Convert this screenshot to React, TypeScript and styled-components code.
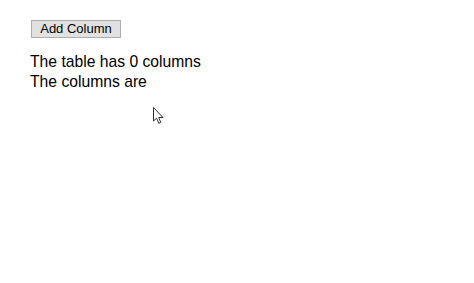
import React, { useState } from "react";
import styled, { createGlobalStyle } from "styled-components";

const GlobalStyle = createGlobalStyle`
  html, body {
    margin: 0;
    padding: 0;
    background: #ffffff;
  }
  body {
    font-family: "Liberation Sans", Arial, sans-serif;
    color: #000000;
  }
`;

const Page = styled.main`
  position: relative;
  width: 474px;
  height: 283px;
  padding: 20px 0 0 30px;
  box-sizing: border-box;
  overflow: hidden;
`;

const Toolbar = styled.div`
  display: flex;
  padding-left: 1px;
`;

const AddButton = styled.button`
  width: 90px;
  height: 18px;
  padding: 0;
  margin: 0;
  font-family: "Liberation Sans", Arial, sans-serif;
  font-size: 13px;
  line-height: 16px;
  color: #000000;
  background: #e1e1e1;
  border: 1px solid #adadad;
  border-radius: 0;
  cursor: default;
`;

const Summary = styled.div`
  display: flex;
  flex-direction: column;
  margin-top: 14px;
  font-size: 15.7px;
  line-height: 20px;
`;

const Line = styled.p`
  margin: 0;
`;

const Cursor = styled.svg`
  position: absolute;
  left: 153px;
  top: 107px;
`;

const PointerIcon = () => (
  <Cursor width="12" height="18" viewBox="0 0 12 18">
    <path
      d="M0.5 0.5 L0.5 14 L3.6 11.2 L5.8 16.3 L7.8 15.4 L5.7 10.5 L10 10.5 Z"
      fill="#ffffff"
      stroke="#333333"
      strokeWidth="1"
      strokeLinejoin="round"
    />
  </Cursor>
);

export default function App() {
  const [columns, setColumns] = useState<string[]>([]);

  const addColumn = () => {
    setColumns((prev) => [...prev, `Column ${prev.length + 1}`]);
  };

  return (
    <>
      <GlobalStyle />
      <Page>
        <Toolbar>
          <AddButton onClick={addColumn}>Add Column</AddButton>
        </Toolbar>
        <Summary>
          <Line>The table has {columns.length} columns</Line>
          <Line>The columns are {columns.join(", ")}</Line>
        </Summary>
        <PointerIcon />
      </Page>
    </>
  );
}
